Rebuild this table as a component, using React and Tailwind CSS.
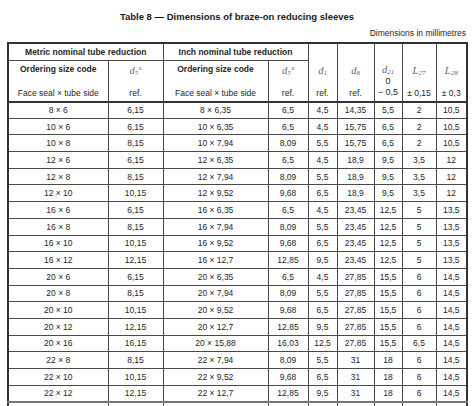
import React from "react";

const rows = [
  ["8 × 6", "6,15", "8 × 6,35", "6,5", "4,5", "14,35", "5,5", "2", "10,5"],
  ["10 × 6", "6,15", "10 × 6,35", "6,5", "4,5", "15,75", "6,5", "2", "10,5"],
  ["10 × 8", "8,15", "10 × 7,94", "8,09", "5,5", "15,75", "6,5", "2", "10,5"],
  ["12 × 6", "6,15", "12 × 6,35", "6,5", "4,5", "18,9", "9,5", "3,5", "12"],
  ["12 × 8", "8,15", "12 × 7,94", "8,09", "5,5", "18,9", "9,5", "3,5", "12"],
  ["12 × 10", "10,15", "12 × 9,52", "9,68", "6,5", "18,9", "9,5", "3,5", "12"],
  ["16 × 6", "6,15", "16 × 6,35", "6,5", "4,5", "23,45", "12,5", "5", "13,5"],
  ["16 × 8", "8,15", "16 × 7,94", "8,09", "5,5", "23,45", "12,5", "5", "13,5"],
  ["16 × 10", "10,15", "16 × 9,52", "9,68", "6,5", "23,45", "12,5", "5", "13,5"],
  ["16 × 12", "12,15", "16 × 12,7", "12,85", "9,5", "23,45", "12,5", "5", "13,5"],
  ["20 × 6", "6,15", "20 × 6,35", "6,5", "4,5", "27,85", "15,5", "6", "14,5"],
  ["20 × 8", "8,15", "20 × 7,94", "8,09", "5,5", "27,85", "15,5", "6", "14,5"],
  ["20 × 10", "10,15", "20 × 9,52", "9,68", "6,5", "27,85", "15,5", "6", "14,5"],
  ["20 × 12", "12,15", "20 × 12,7", "12,85", "9,5", "27,85", "15,5", "6", "14,5"],
  ["20 × 16", "16,15", "20 × 15,88", "16,03", "12,5", "27,85", "15,5", "6,5", "14,5"],
  ["22 × 8", "8,15", "22 × 7,94", "8,09", "5,5", "31", "18", "6", "14,5"],
  ["22 × 10", "10,15", "22 × 9,52", "9,68", "6,5", "31", "18", "6", "14,5"],
  ["22 × 12", "12,15", "22 × 12,7", "12,85", "9,5", "31", "18", "6", "14,5"],
];

const widths = [100, 55, 105, 40, 29, 37, 28, 34, 31];

function Sym({ base, sub, sup }) {
  return (
    <span className="font-['Liberation_Serif',serif] italic text-[10.5px] text-[#666]">
      {base}
      <sub className="text-[7px]">{sub}</sub>
      {sup ? <sup className="text-[6.5px] not-italic ml-[0.5px]">{sup}</sup> : null}
    </span>
  );
}

function HeadPair({ top, bottom, bold }) {
  return (
    <div className="h-[40px] flex flex-col justify-between items-center pt-[3px] pb-[3px] leading-[10px]">
      <div className={bold ? "font-bold" : "pt-[2px]"}>{top}</div>
      <div>{bottom}</div>
    </div>
  );
}

export default function App() {
  const base = "border border-[#4a4a4a] p-0 text-center";
  const cell = base + " align-middle";
  const symCell = base + " font-normal align-bottom border-b-2 border-b-[#333]";
  return (
    <div className="w-[474px] h-[406px] overflow-hidden bg-white font-['Liberation_Sans',Arial,sans-serif] text-[#262626]">
      <div className="pt-[11px] text-center font-bold text-[9.5px] leading-[12px] text-[#1a1a1a]">
        Table 8 — Dimensions of braze-on reducing sleeves
      </div>
      <div className="mt-[5px] pr-[8px] text-right text-[8.5px] leading-[11px]">
        Dimensions in millimetres
      </div>
      <table className="ml-[7px] mt-[3px] w-[459px] table-fixed border-collapse border-2 border-[#333] text-[8.5px] leading-[10px]">
        <colgroup>
          {widths.map((w, i) => (
            <col key={i} style={{ width: w }} />
          ))}
        </colgroup>
        <thead>
          <tr className="h-[17px]">
            <th colSpan={2} className={cell + " font-bold"}>
              Metric nominal tube reduction
            </th>
            <th colSpan={2} className={cell + " font-bold"}>
              Inch nominal tube reduction
            </th>
            <th rowSpan={2} className={symCell}>
              <HeadPair top={<Sym base="d" sub="1" />} bottom="ref." />
            </th>
            <th rowSpan={2} className={symCell}>
              <HeadPair top={<Sym base="d" sub="8" />} bottom="ref." />
            </th>
            <th rowSpan={2} className={symCell}>
              <div className="h-[40px] flex flex-col items-center pt-[4px] pb-[3px] leading-[10px]">
                <div>
                  <Sym base="d" sub="21" />
                </div>
                <div className="mt-[1px] text-[9px]">0</div>
                <div className="mt-[1px] text-[9px]">− 0,5</div>
              </div>
            </th>
            <th rowSpan={2} className={symCell}>
              <HeadPair top={<Sym base="L" sub="27" />} bottom="± 0,15" />
            </th>
            <th rowSpan={2} className={symCell}>
              <HeadPair top={<Sym base="L" sub="28" />} bottom="± 0,3" />
            </th>
          </tr>
          <tr className="h-[41px]">
            <th className={cell + " font-normal border-b-2 border-b-[#333]"}>
              <HeadPair top="Ordering size code" bottom="Face seal × tube side" bold />
            </th>
            <th className={cell + " font-normal border-b-2 border-b-[#333]"}>
              <HeadPair top={<Sym base="d" sub="5" sup="a" />} bottom="ref." />
            </th>
            <th className={cell + " font-normal border-b-2 border-b-[#333]"}>
              <HeadPair top="Ordering size code" bottom="Face seal × tube side" bold />
            </th>
            <th className={cell + " font-normal border-b-2 border-b-[#333]"}>
              <HeadPair top={<Sym base="d" sub="5" sup="a" />} bottom="ref." />
            </th>
          </tr>
        </thead>
        <tbody>
          {rows.map((r, i) => (
            <tr key={i} className="h-[16.7px]">
              {r.map((v, j) => (
                <td key={j} className={cell}>
                  {v}
                </td>
              ))}
            </tr>
          ))}
          <tr className="h-[16.7px]">
            {widths.map((w, j) => (
              <td key={j} className={cell + " border-t-2 border-t-[#777]"}></td>
            ))}
          </tr>
        </tbody>
      </table>
    </div>
  );
}
